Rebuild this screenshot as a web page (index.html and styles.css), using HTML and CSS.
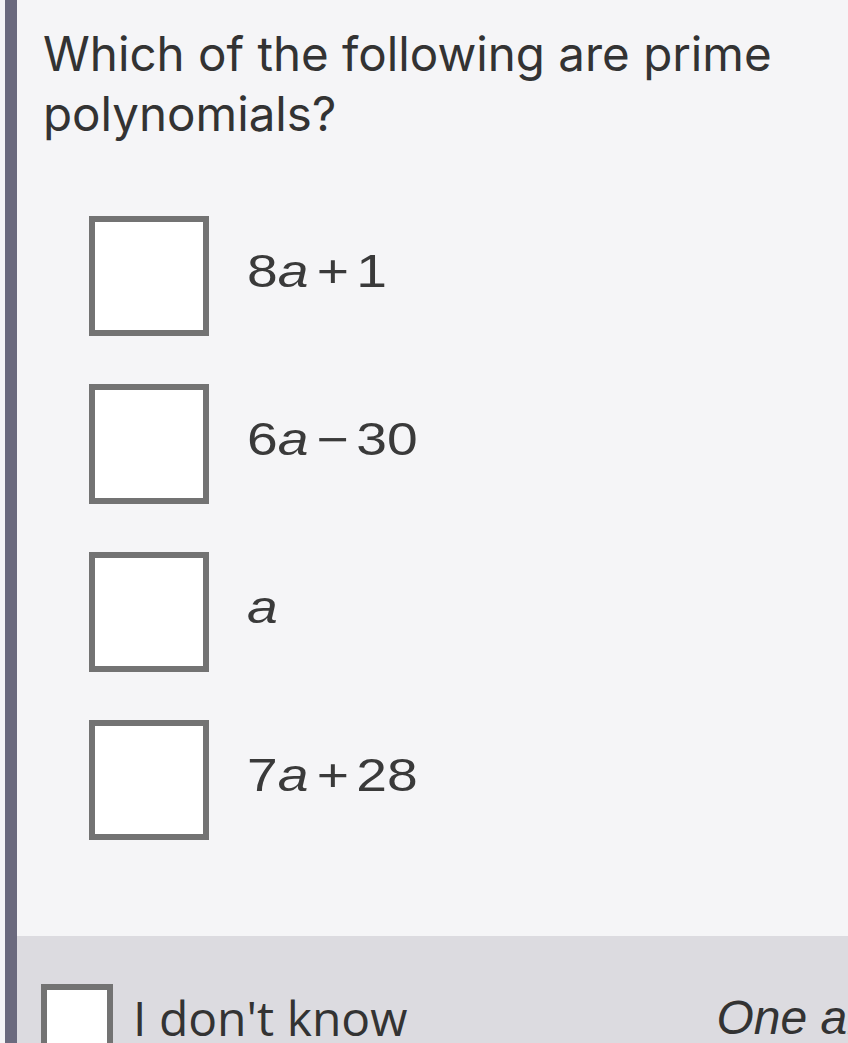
FILE: index.html
```html
<!DOCTYPE html>
<html>
<head>
<meta charset="utf-8">
<link rel="stylesheet" href="styles.css">
</head>
<body>
<div class="page">
  <div class="card">
    <h1 class="question">Which of the following are prime polynomials?</h1>
    <ul class="options">
      <li class="option">
        <span class="box"></span>
        <span class="math"><span class="num">8</span><span class="var">a</span><span class="op">+</span><span class="num">1</span></span>
      </li>
      <li class="option">
        <span class="box"></span>
        <span class="math"><span class="num">6</span><span class="var">a</span><span class="op">−</span><span class="num">30</span></span>
      </li>
      <li class="option">
        <span class="box"></span>
        <span class="math"><span class="var">a</span></span>
      </li>
      <li class="option">
        <span class="box"></span>
        <span class="math"><span class="num">7</span><span class="var">a</span><span class="op">+</span><span class="num">28</span></span>
      </li>
    </ul>
  </div>
  <div class="footer">
    <span class="box box-small"></span>
    <span class="idk">I don't know</span>
    <span class="hint">One answer is correct</span>
  </div>
</div>
</body>
</html>
```

FILE: styles.css
```css
html, body {
  margin: 0;
  padding: 0;
  background: #f5f5f7;
  overflow: hidden;
}

.page {
  margin-left: 5px;
  border-left: 12px solid #6b6a7e;
  min-height: 1043px;
  display: flex;
  flex-direction: column;
}

.card {
  padding: 24px 20px 0 26px;
  height: 936px;
  box-sizing: border-box;
}

.question {
  margin: 0;
  font-family: Inter, "Open Sans", sans-serif;
  font-weight: 400;
  font-size: 47.5px;
  line-height: 60px;
  color: #333333;
}

.options {
  list-style: none;
  margin: 72px 0 0 46px;
  padding: 0;
  display: flex;
  flex-direction: column;
  gap: 48px;
}

.option {
  display: flex;
  align-items: center;
  gap: 38px;
  height: 120px;
}

.box {
  display: block;
  flex: none;
  width: 120px;
  height: 120px;
  box-sizing: border-box;
  border: 6px solid #737373;
  background: #ffffff;
}

.math {
  display: inline-flex;
  align-items: baseline;
  font-family: "Liberation Sans", Arial, sans-serif;
  font-size: 46px;
  line-height: 53px;
  color: #3a3a3a;
  transform: scaleX(1.2);
  transform-origin: left center;
  padding-bottom: 10px;
}

.var {
  font-style: italic;
}

.op {
  margin: 0 6px 0 7px;
}

.footer {
  flex: 1;
  background: #dcdbe0;
  display: flex;
  align-items: flex-start;
  padding: 48px 0 0 24px;
  white-space: nowrap;
  overflow: hidden;
}

.box-small {
  width: 72px;
  height: 72px;
}

.idk {
  margin-left: 20px;
  margin-top: 1px;
  font-family: "Open Sans", sans-serif;
  font-size: 48px;
  line-height: 65px;
  color: #333333;
}

.hint {
  margin-left: 309px;
  margin-top: 1px;
  font-family: "Liberation Sans", Arial, sans-serif;
  font-style: italic;
  font-size: 48px;
  line-height: 65px;
  color: #333333;
}
```
